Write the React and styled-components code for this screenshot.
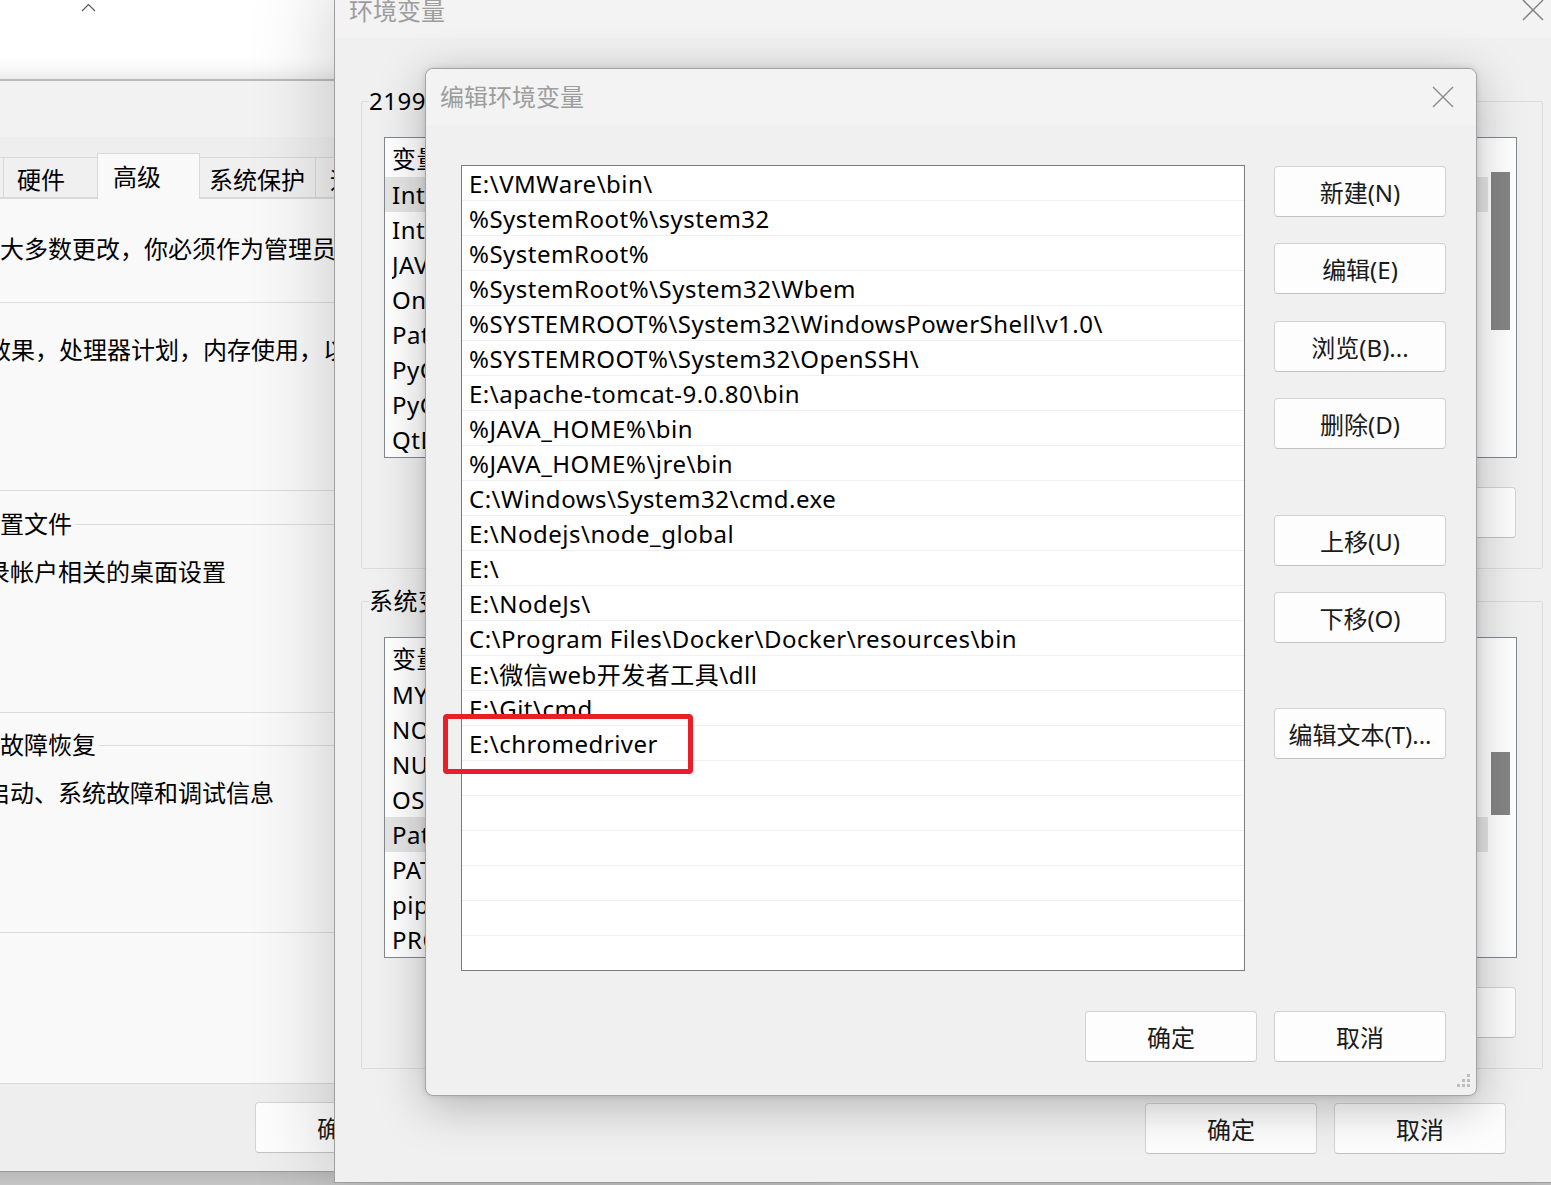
import React from "react";
import styled, { createGlobalStyle } from "styled-components";

const GlobalStyle = createGlobalStyle`
  * { box-sizing: border-box; }
  html, body { margin: 0; padding: 0; background: #c9c9c9; }
  body {
    font-family: "Noto Sans", "Noto Sans CJK SC", sans-serif;
    font-size: 24px;
    color: #000;
    overflow: hidden;
  }
`;

const Desktop = styled.div`
  position: relative;
  width: 1551px;
  height: 1185px;
  overflow: hidden;
  background: #c9c9c9;
`;

/* settings app peeking out behind everything */
const SettingsBackdrop = styled.div`
  position: absolute;
  z-index: 0;
  left: 0;
  top: 0;
  width: 420px;
  height: 140px;
  background: #fff;
  display: flex;
  align-items: flex-start;
  padding: 3px 0 0 81px;
`;

/* ---------- system properties window (left) ---------- */

const SysWindow = styled.div`
  position: absolute;
  z-index: 1;
  left: -100px;
  top: 79px;
  width: 930px;
  height: 1093px;
  background: #eeeeee;
  border-top: 2px solid #bababa;
  border-bottom: 1px solid #9c9c9c;
  box-shadow: 0 0 22px rgba(0, 0, 0, 0.16);
  display: flex;
  flex-direction: column;
`;

const SysTitle = styled.div`
  height: 56px;
  flex: none;
  background: #f2f2f2;
`;

const SysClient = styled.div`
  flex: 1;
  display: flex;
  flex-direction: column;
  padding: 16px 14px 0;
`;

const TabStrip = styled.div`
  position: relative;
  z-index: 1;
  height: 45px;
  margin-left: -30px;
  display: flex;
  align-items: flex-end;
`;

const Tab = styled.div`
  width: ${(p) => p.$w}px;
  height: ${(p) => (p.$active ? 46 : 41)}px;
  margin-bottom: ${(p) => (p.$active ? -1 : 0)}px;
  margin-right: -1px;
  padding: ${(p) => (p.$active ? 6 : 5)}px 0 0 ${(p) => p.$pl}px;
  background: ${(p) => (p.$active ? "#f9f9f9" : "#f0f0f0")};
  border: 1px solid #d9d9d9;
  border-bottom: ${(p) => (p.$active ? "none" : "1px solid #d9d9d9")};
  line-height: 34px;
  white-space: nowrap;
  overflow: hidden;
`;

const TabPanel = styled.div`
  height: 886px;
  flex: none;
  background: #f9f9f9;
  border: 1px solid #d9d9d9;
  padding: 33px 0 0 13px;
  display: flex;
  flex-direction: column;
`;

const PanelText = styled.div`
  line-height: 34px;
  white-space: nowrap;
  margin-left: ${(p) => p.$indent || 0}px;
`;

const Group = styled.fieldset`
  margin: ${(p) => p.$mt}px 24px 0 -10px;
  padding: 0 9px;
  border: 1px solid #dcdcdc;
  border-radius: 2px;
  min-width: 0;
`;

const GroupTitle = styled.legend`
  padding: 0 3px 0 0;
  line-height: 34px;
  white-space: nowrap;
`;

const GroupBody = styled.div`
  height: ${(p) => p.$h}px;
  padding-top: 14px;
`;

const SysFooter = styled.div`
  flex: 1;
  display: flex;
  justify-content: flex-end;
  gap: 17px;
  padding: 18px 11px 0 0;
`;

/* ---------- shared ---------- */

const Button = styled.button`
  width: 172px;
  height: 51px;
  flex: none;
  margin-top: ${(p) => p.$mt || 0}px;
  padding: 0;
  background: #fdfdfd;
  border: 1px solid #d3d3d3;
  border-bottom-color: #c2c2c2;
  border-radius: 4px;
  font-family: inherit;
  font-size: 24px;
  color: #1a1a1a;
  white-space: nowrap;
`;

const CloseBox = styled.div`
  width: ${(p) => p.$w}px;
  flex: none;
  display: flex;
  align-items: center;
  justify-content: center;
`;

const CloseIcon = ({ color = "#8a8a8a" }) => (
  <svg width="22" height="22" viewBox="0 0 22 22">
    <path d="M1 1 L21 21 M21 1 L1 21" stroke={color} strokeWidth="1.4" fill="none" />
  </svg>
);

/* ---------- environment variables window (middle) ---------- */

const EnvWindow = styled.div`
  position: absolute;
  z-index: 2;
  left: 334px;
  top: -20px;
  width: 1236px;
  height: 1203px;
  background: #f0f0f0;
  border: 1px solid #9e9e9e;
  box-shadow: 0 0 80px rgba(0, 0, 0, 0.2);
  display: flex;
  flex-direction: column;
`;

const WindowTitle = styled.div`
  height: ${(p) => p.$h}px;
  flex: none;
  display: flex;
  justify-content: space-between;
  align-items: stretch;
  background: #f3f3f3;
  border-radius: ${(p) => (p.$round ? "8px 8px 0 0" : "0")};
`;

const TitleText = styled.div`
  align-self: center;
  padding-left: 14px;
  margin-bottom: ${(p) => p.$lift || 0}px;
  color: #9d9d9d;
  white-space: nowrap;
`;

const EnvBody = styled.div`
  flex: 1;
  display: flex;
  flex-direction: column;
  padding: 46px 26px 0;
`;

const VarGroup = styled.fieldset`
  margin: ${(p) => p.$mt}px 0 0;
  padding: 0 7px 30px;
  border: 1px solid #dcdcdc;
  border-radius: 2px;
  min-width: 0;
`;

const VarGroupTitle = styled.legend`
  padding: 0 2px 0 0;
  line-height: 34px;
  white-space: nowrap;
  letter-spacing: 0.5px;
`;

const VarList = styled.div`
  height: 321px;
  margin: 19px 18px 0 15px;
  background: #fff;
  border: 1px solid #828790;
  display: flex;
`;

const VarTable = styled.div`
  flex: 1;
  min-width: 0;
  display: flex;
  flex-direction: column;
`;

const VarRow = styled.div`
  height: ${(p) => (p.$header ? 39 : 35)}px;
  flex: none;
  display: flex;
  align-items: center;
  padding-left: 7px;
  background: ${(p) => (p.$selected ? "#e5e5e5" : "transparent")};
  white-space: nowrap;
  overflow: hidden;
  letter-spacing: 0.5px;
`;

const VarName = styled.span`
  width: 330px;
  flex: none;
  overflow: hidden;
`;

const VarValue = styled.span`
  overflow: hidden;
`;

const ScrollTrack = styled.div`
  width: 28px;
  flex: none;
  padding: ${(p) => p.$top}px 0 0 3px;
`;

const ScrollThumb = styled.div`
  width: 19px;
  height: ${(p) => p.$h}px;
  background: #858585;
`;

const ButtonRow = styled.div`
  display: flex;
  justify-content: flex-end;
  gap: 17px;
  margin: ${(p) => p.$mt || 29}px ${(p) => p.$mr || 0}px 0 0;
`;

/* ---------- edit environment variable dialog (front) ---------- */

const EditDialog = styled.div`
  position: absolute;
  z-index: 3;
  left: 425px;
  top: 68px;
  width: 1052px;
  height: 1028px;
  background: #f0f0f0;
  border: 1px solid #a3a3a3;
  border-radius: 8px;
  box-shadow: 0 10px 48px rgba(0, 0, 0, 0.26), 0 0 6px rgba(0, 0, 0, 0.12);
  display: flex;
  flex-direction: column;
`;

const EditBody = styled.div`
  flex: 1;
  display: flex;
  flex-direction: column;
  padding: 40px 30px 33px 35px;
`;

const EditMain = styled.div`
  display: flex;
  gap: 29px;
`;

const PathList = styled.div`
  flex: 1;
  height: 806px;
  background: #fff;
  border: 1px solid #7c7c7c;
  display: flex;
  flex-direction: column;
  overflow: hidden;
`;

const PathRow = styled.div`
  height: 35px;
  flex: none;
  padding: 1px 0 0 7px;
  display: flex;
  align-items: center;
  border-bottom: 1px solid #efefef;
  white-space: nowrap;
  letter-spacing: 0.5px;
`;

const ButtonColumn = styled.div`
  width: 172px;
  flex: none;
  display: flex;
  flex-direction: column;
`;

const Highlight = styled.div`
  position: absolute;
  left: 17px;
  top: 645px;
  width: 250px;
  height: 60px;
  border: 5px solid #e81f28;
  border-radius: 4px;
  pointer-events: none;
`;

const Grip = styled.svg`
  position: absolute;
  right: 4px;
  bottom: 6px;
`;

const pathItems = [
  "E:\\VMWare\\bin\\",
  "%SystemRoot%\\system32",
  "%SystemRoot%",
  "%SystemRoot%\\System32\\Wbem",
  "%SYSTEMROOT%\\System32\\WindowsPowerShell\\v1.0\\",
  "%SYSTEMROOT%\\System32\\OpenSSH\\",
  "E:\\apache-tomcat-9.0.80\\bin",
  "%JAVA_HOME%\\bin",
  "%JAVA_HOME%\\jre\\bin",
  "C:\\Windows\\System32\\cmd.exe",
  "E:\\Nodejs\\node_global",
  "E:\\",
  "E:\\NodeJs\\",
  "C:\\Program Files\\Docker\\Docker\\resources\\bin",
  "E:\\微信web开发者工具\\dll",
  "E:\\Git\\cmd",
  "E:\\chromedriver",
];

const userVars = [
  ["IntelliJ IDEA", "E:\\IntelliJ IDEA\\bin;"],
  ["IntelliJ IDEA Community Edition", "E:\\IDEA CE\\bin;"],
  ["JAVA_HOME", "E:\\Java\\jdk1.8.0"],
  ["OneDrive", "C:\\Users\\2199\\OneDrive"],
  ["Path", "E:\\Python\\Scripts\\;E:\\Python\\"],
  ["PyCharm", "E:\\PyCharm\\bin;"],
  ["PyCharm Community Edition", "E:\\PyCharm CE\\bin;"],
  ["QtDir", "E:\\Qt"],
];

const systemVars = [
  ["MYSQL_HOME", "E:\\mysql-8.0"],
  ["NODE_PATH", "E:\\Nodejs\\node_modules"],
  ["NUMBER_OF_PROCESSORS", "16"],
  ["OS", "Windows_NT"],
  ["Path", "E:\\VMWare\\bin\\;%SystemRoot%\\system32"],
  ["PATHEXT", ".COM;.EXE;.BAT;.CMD;.VBS"],
  ["pip", "E:\\Python\\Scripts"],
  ["PROCESSOR_ARCHITECTURE", "AMD64"],
];

const VarListBox = ({ rows, selected, thumbTop, thumbHeight }) => (
  <VarList>
    <VarTable>
      <VarRow $header>
        <VarName>变量</VarName>
        <VarValue>值</VarValue>
      </VarRow>
      {rows.map(([name, value], i) => (
        <VarRow key={name + i} $selected={i === selected}>
          <VarName>{name}</VarName>
          <VarValue>{value}</VarValue>
        </VarRow>
      ))}
    </VarTable>
    <ScrollTrack $top={thumbTop}>
      <ScrollThumb $h={thumbHeight} />
    </ScrollTrack>
  </VarList>
);

const App = () => {
  const emptyRows = 23 - pathItems.length;
  return (
    <>
      <GlobalStyle />
      <Desktop>
        <SettingsBackdrop>
          <svg width="15" height="9" viewBox="0 0 15 9">
            <polyline points="1,8 7.5,1.5 14,8" fill="none" stroke="#5a5a5a" strokeWidth="1.2" />
          </svg>
        </SettingsBackdrop>

        <SysWindow>
          <SysTitle />
          <SysClient>
            <TabStrip>
              <Tab $w={120} $pl={10}>计算机名</Tab>
              <Tab $w={95} $pl={13}>硬件</Tab>
              <Tab $w={103} $pl={15} $active>高级</Tab>
              <Tab $w={117} $pl={9}>系统保护</Tab>
              <Tab $w={110} $pl={14}>远程</Tab>
            </TabStrip>
            <TabPanel>
              <PanelText>要进行大多数更改，你必须作为管理员登录。</PanelText>
              <Group $mt={19}>
                <GroupTitle>性能</GroupTitle>
                <GroupBody $h={171}>
                  <PanelText $indent={11}>视觉效果，处理器计划，内存使用，以及虚拟内存</PanelText>
                </GroupBody>
              </Group>
              <Group $mt={16}>
                <GroupTitle>用户配置文件</GroupTitle>
                <GroupBody $h={171}>
                  <PanelText $indent={10}>与登录帐户相关的桌面设置</PanelText>
                </GroupBody>
              </Group>
              <Group $mt={15}>
                <GroupTitle>启动和故障恢复</GroupTitle>
                <GroupBody $h={170}>
                  <PanelText $indent={10}>系统启动、系统故障和调试信息</PanelText>
                </GroupBody>
              </Group>
            </TabPanel>
            <SysFooter>
              <Button>确定</Button>
              <Button>取消</Button>
              <Button>应用(A)</Button>
            </SysFooter>
          </SysClient>
        </SysWindow>

        <EnvWindow>
          <WindowTitle $h={57}>
            <TitleText>环境变量</TitleText>
            <CloseBox $w={72}>
              <CloseIcon color="#7d7d7d" />
            </CloseBox>
          </WindowTitle>
          <EnvBody>
            <VarGroup $mt={0}>
              <VarGroupTitle>21992 的用户变量(U)</VarGroupTitle>
              <VarListBox rows={userVars} selected={0} thumbTop={34} thumbHeight={158} />
              <ButtonRow $mr={19}>
                <Button>新建(N)...</Button>
                <Button>编辑(E)...</Button>
                <Button>删除(D)</Button>
              </ButtonRow>
            </VarGroup>
            <VarGroup $mt={15}>
              <VarGroupTitle>系统变量(S)</VarGroupTitle>
              <VarListBox rows={systemVars} selected={4} thumbTop={114} thumbHeight={63} />
              <ButtonRow $mr={19}>
                <Button>新建(W)...</Button>
                <Button>编辑(I)...</Button>
                <Button>删除(L)</Button>
              </ButtonRow>
            </VarGroup>
            <ButtonRow $mr={37} $mt={34}>
              <Button>确定</Button>
              <Button>取消</Button>
            </ButtonRow>
          </EnvBody>
        </EnvWindow>

        <EditDialog>
          <WindowTitle $h={56} $round>
            <TitleText $lift={4}>编辑环境变量</TitleText>
            <CloseBox $w={66}>
              <CloseIcon />
            </CloseBox>
          </WindowTitle>
          <EditBody>
            <EditMain>
              <PathList>
                {pathItems.map((p) => (
                  <PathRow key={p}>{p}</PathRow>
                ))}
                {Array.from({ length: emptyRows }).map((_, i) => (
                  <PathRow key={"empty" + i} />
                ))}
              </PathList>
              <ButtonColumn>
                <Button $mt={1}>新建(N)</Button>
                <Button $mt={26}>编辑(E)</Button>
                <Button $mt={27}>浏览(B)...</Button>
                <Button $mt={26}>删除(D)</Button>
                <Button $mt={66}>上移(U)</Button>
                <Button $mt={26}>下移(O)</Button>
                <Button $mt={65}>编辑文本(T)...</Button>
              </ButtonColumn>
            </EditMain>
            <ButtonRow $mt={40}>
              <Button>确定</Button>
              <Button>取消</Button>
            </ButtonRow>
          </EditBody>
          <Highlight />
          <Grip width="15" height="15" viewBox="0 0 15 15">
            <g fill="#bdbdbd">
              <rect x="10" y="0" width="3" height="3" />
              <rect x="5" y="5" width="3" height="3" />
              <rect x="10" y="5" width="3" height="3" />
              <rect x="0" y="10" width="3" height="3" />
              <rect x="5" y="10" width="3" height="3" />
              <rect x="10" y="10" width="3" height="3" />
            </g>
          </Grip>
        </EditDialog>
      </Desktop>
    </>
  );
};

export default App;
